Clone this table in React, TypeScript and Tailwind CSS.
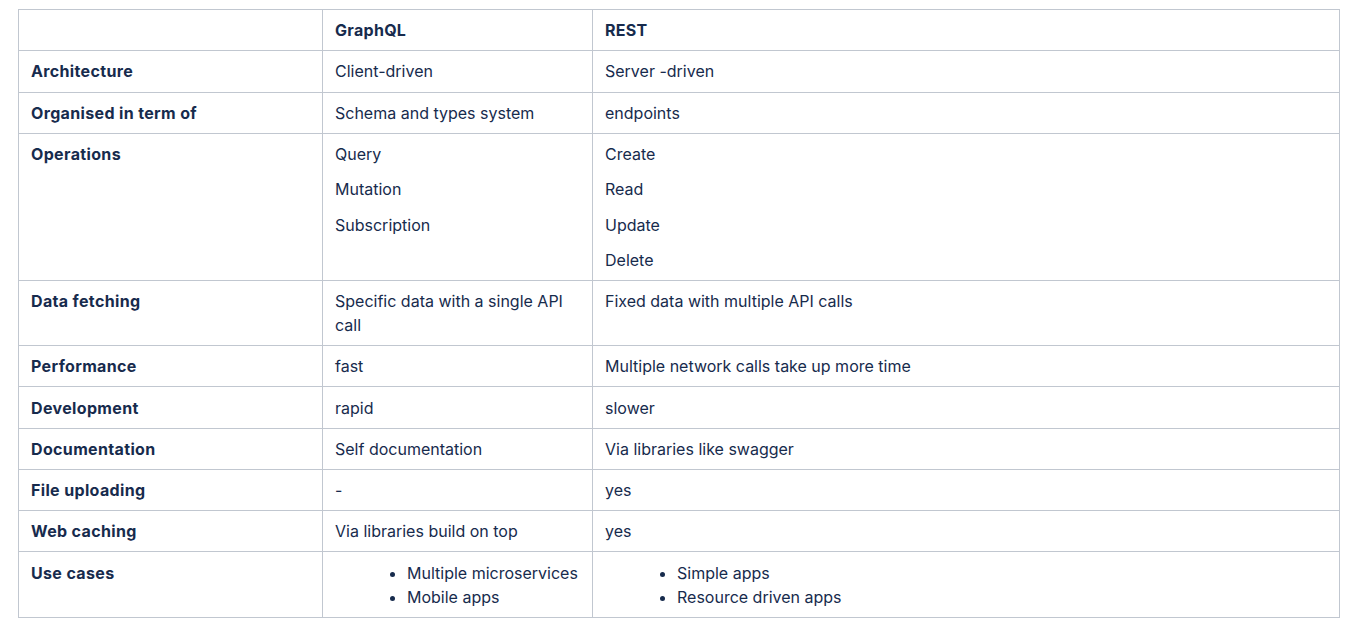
const rows: { label: string; graphql: React.ReactNode; rest: React.ReactNode }[] = [
  { label: "Architecture", graphql: "Client-driven", rest: "Server -driven" },
  { label: "Organised in term of", graphql: "Schema and types system", rest: "endpoints" },
  {
    label: "Operations",
    graphql: <Paras items={["Query", "Mutation", "Subscription"]} />,
    rest: <Paras items={["Create", "Read", "Update", "Delete"]} />,
  },
  {
    label: "Data fetching",
    graphql: "Specific data with a single API call",
    rest: "Fixed data with multiple API calls",
  },
  { label: "Performance", graphql: "fast", rest: "Multiple network calls take up more time" },
  { label: "Development", graphql: "rapid", rest: "slower" },
  { label: "Documentation", graphql: "Self documentation", rest: "Via libraries like swagger" },
  { label: "File uploading", graphql: "-", rest: "yes" },
  { label: "Web caching", graphql: "Via libraries build on top", rest: "yes" },
  {
    label: "Use cases",
    graphql: <Bullets items={["Multiple microservices", "Mobile apps"]} />,
    rest: <Bullets items={["Simple apps", "Resource driven apps"]} />,
  },
];

function Paras({ items }: { items: string[] }) {
  return (
    <div className="flex flex-col gap-[11.33px]">
      {items.map((t) => (
        <p key={t}>{t}</p>
      ))}
    </div>
  );
}

function Bullets({ items }: { items: string[] }) {
  return (
    <ul className="list-disc pl-[72px]">
      {items.map((t) => (
        <li key={t}>{t}</li>
      ))}
    </ul>
  );
}

export default function App() {
  return (
    <div className="min-h-screen bg-white px-[18px] pt-[9px] font-['Inter',sans-serif] text-[16px] leading-6 text-[#172b4d]">
      <table className="w-[1322px] table-fixed border-collapse border border-[#c1c7d0]">
        <colgroup>
          <col className="w-[304px]" />
          <col className="w-[270px]" />
          <col />
        </colgroup>
        <thead>
          <tr>
            <th className="border border-[#c1c7d0] px-3 py-[8.125px] text-left font-bold tracking-[0.3px]" />
            <th className="border border-[#c1c7d0] px-3 py-[8.125px] text-left font-bold tracking-[0.3px]">GraphQL</th>
            <th className="border border-[#c1c7d0] px-3 py-[8.125px] text-left font-bold tracking-[0.3px]">REST</th>
          </tr>
        </thead>
        <tbody>
          {rows.map((r) => (
            <tr key={r.label}>
              <td className="border border-[#c1c7d0] px-3 py-[8.125px] align-top font-bold tracking-[0.35px]">{r.label}</td>
              <td className="border border-[#c1c7d0] px-3 py-[8.125px] align-top">{r.graphql}</td>
              <td className="border border-[#c1c7d0] px-3 py-[8.125px] align-top">{r.rest}</td>
            </tr>
          ))}
        </tbody>
      </table>
    </div>
  );
}
